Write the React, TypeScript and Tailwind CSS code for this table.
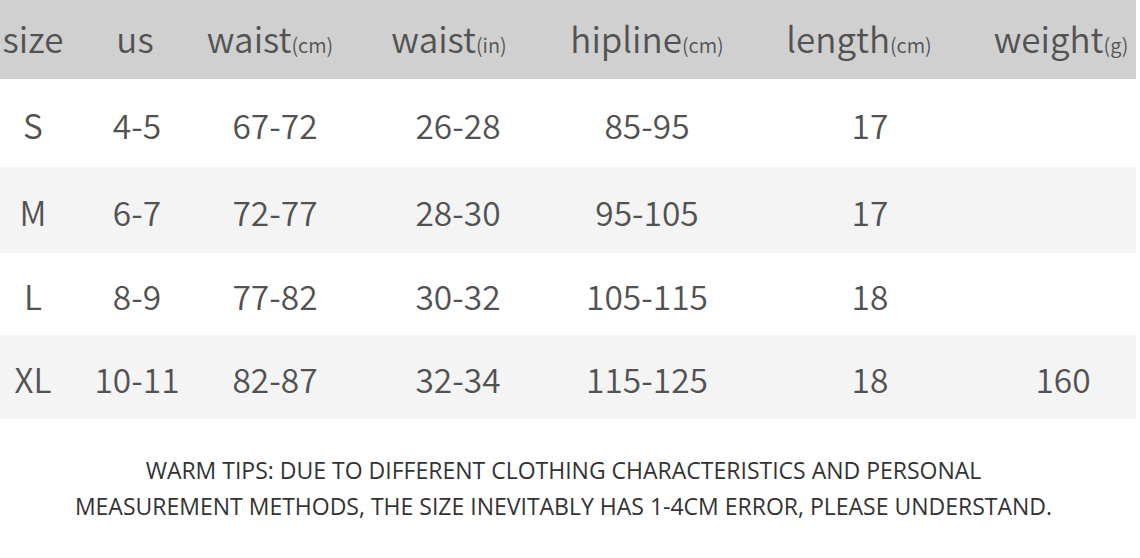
import React from "react";

const cols = "grid grid-cols-[66px_142px_134px_232px_146px_300px_86px_1fr]";

const headers: { main: string; unit: string; pr: string }[] = [
  { main: "size", unit: "", pr: "pr-0" },
  { main: "us", unit: "", pr: "pr-[4px]" },
  { main: "waist", unit: "(cm)", pr: "pr-[10px]" },
  { main: "waist", unit: "(in)", pr: "pr-[18px]" },
  { main: "hipline", unit: "(cm)", pr: "pr-0" },
  { main: "length", unit: "(cm)", pr: "pr-[22px]" },
  { main: "weight", unit: "(g)", pr: "pr-[4px]" },
];

const rows: { h: string; bg: string; cells: string[] }[] = [
  { h: "h-[88px]", bg: "bg-white", cells: ["S", "4-5", "67-72", "26-28", "85-95", "17", ""] },
  { h: "h-[86px]", bg: "bg-[#f4f4f4]", cells: ["M", "6-7", "72-77", "28-30", "95-105", "17", ""] },
  { h: "h-[82px]", bg: "bg-white", cells: ["L", "8-9", "77-82", "30-32", "105-115", "18", ""] },
  { h: "h-[84px]", bg: "bg-[#f4f4f4]", cells: ["XL", "10-11", "82-87", "32-34", "115-125", "18", "160"] },
];

export default function App() {
  return (
    <div className="w-[1140px] h-[558px] bg-white overflow-hidden">
      <div
        className="w-[1136px] text-[#525252] font-[350]"
        style={{ fontFamily: '"Noto Sans CJK SC", "Noto Sans", sans-serif' }}
      >
        <div className={`${cols} h-[79px] bg-[#d0d0d0]`}>
          {headers.map((h, i) => (
            <div key={i} className={`flex items-center justify-center pb-[4px] ${h.pr}`}>
              <div className="flex items-baseline whitespace-nowrap">
                <span className="text-[35px] leading-none">{h.main}</span>
                {h.unit && <span className="text-[20px] leading-none">{h.unit}</span>}
              </div>
            </div>
          ))}
          <div />
        </div>
        {rows.map((r, ri) => (
          <div key={ri} className={`${cols} ${r.h} ${r.bg}`}>
            {r.cells.map((c, ci) => (
              <div key={ci} className="flex items-center justify-center whitespace-nowrap text-[33.5px] leading-none pt-[3px]">
                {c}
              </div>
            ))}
            <div />
          </div>
        ))}
      </div>
      <div
        className="pt-[33px] flex flex-col items-center text-[#333333] text-[23px] leading-[36px] w-[1127px]"
        style={{ fontFamily: '"Open Sans", "Liberation Sans", sans-serif' }}
      >
        <p>WARM TIPS: DUE TO DIFFERENT CLOTHING CHARACTERISTICS AND PERSONAL</p>
        <p>MEASUREMENT METHODS, THE SIZE INEVITABLY HAS 1-4CM ERROR, PLEASE UNDERSTAND.</p>
      </div>
    </div>
  );
}
